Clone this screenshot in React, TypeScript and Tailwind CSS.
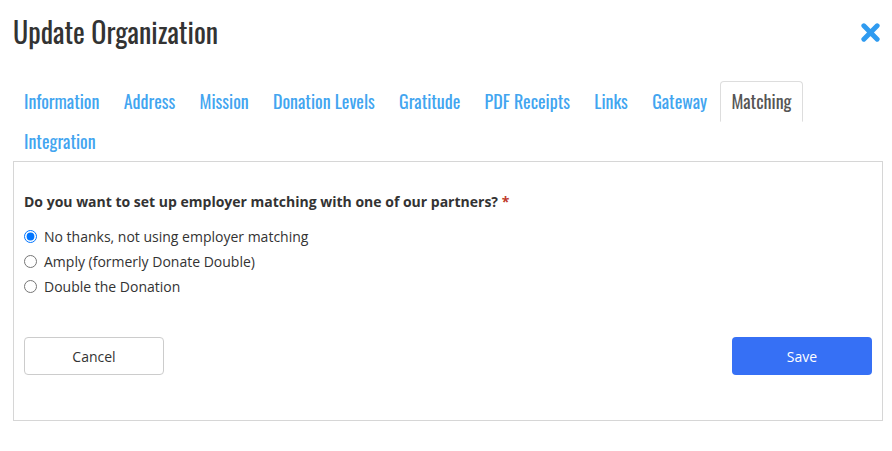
import React, { useState } from 'react'

const tabs = [
  'Information',
  'Address',
  'Mission',
  'Donation Levels',
  'Gratitude',
  'PDF Receipts',
  'Links',
  'Gateway',
  'Matching',
  'Integration',
]

const options = [
  'No thanks, not using employer matching',
  'Amply (formerly Donate Double)',
  'Double the Donation',
]

const heading = { fontFamily: '"Oswald", "Liberation Sans Narrow", "DejaVu Sans Condensed", sans-serif' }

export default function App() {
  const [choice, setChoice] = useState(0)
  const active = 'Matching'

  return (
    <div
      className="w-[892px] h-[451px] bg-white pl-[13px] pr-[9px] text-[#333]"
      style={{ fontFamily: '"Open Sans", "Liberation Sans", sans-serif' }}
    >
      <div className="flex items-center justify-between h-[81px] pb-[17px] pr-[3px]">
        <h1 className="text-[28px] leading-[40px] text-[#333] font-normal" style={heading}>
          Update Organization
        </h1>
        <button className="w-[20px] h-[20px] flex items-center justify-center" aria-label="Close">
          <svg width="19" height="19" viewBox="0 0 20 20">
            <path d="M3 3 L17 17 M17 3 L3 17" stroke="#2f9bf0" strokeWidth="5.2" strokeLinecap="round" />
          </svg>
        </button>
      </div>

      <ul className="flex flex-wrap">
        {tabs.map((t) => (
          <li key={t} className="mr-[2.3px] -mb-px">
            <a
              href="#"
              className={`block px-[10px] py-[9px] leading-[21px] text-[18px] border rounded-t-[4px] ${
                t === active
                  ? 'border-[#ddd] border-b-white bg-white text-[#555] relative z-10'
                  : 'border-transparent text-[#42a5f0]'
              }`}
              style={heading}
            >
              {t}
            </a>
          </li>
        ))}
      </ul>

      <div className="border border-[#d6d6d6] px-[10px] pt-[30px] pb-[45px]">
        <p className="text-[14px] leading-[20px] font-bold mb-[12px]">
          Do you want to set up employer matching with one of our partners?{' '}
          <span className="text-[#c0392b]">*</span>
        </p>
        {options.map((o, i) => (
          <label key={o} className="flex items-center h-[25px] text-[14px] gap-[7px] cursor-pointer">
            <input
              type="radio"
              name="matching"
              checked={choice === i}
              onChange={() => setChoice(i)}
              className="m-0 w-[13px] h-[13px]"
            />
            {o}
          </label>
        ))}
        <div className="flex justify-between mt-[38px]">
          <button className="w-[140px] h-[38px] border border-[#ccc] rounded-[4px] bg-white text-[14px] text-[#333]">
            Cancel
          </button>
          <button className="w-[140px] h-[38px] rounded-[4px] bg-[#3670f5] text-[14px] text-white">
            Save
          </button>
        </div>
      </div>
    </div>
  )
}
